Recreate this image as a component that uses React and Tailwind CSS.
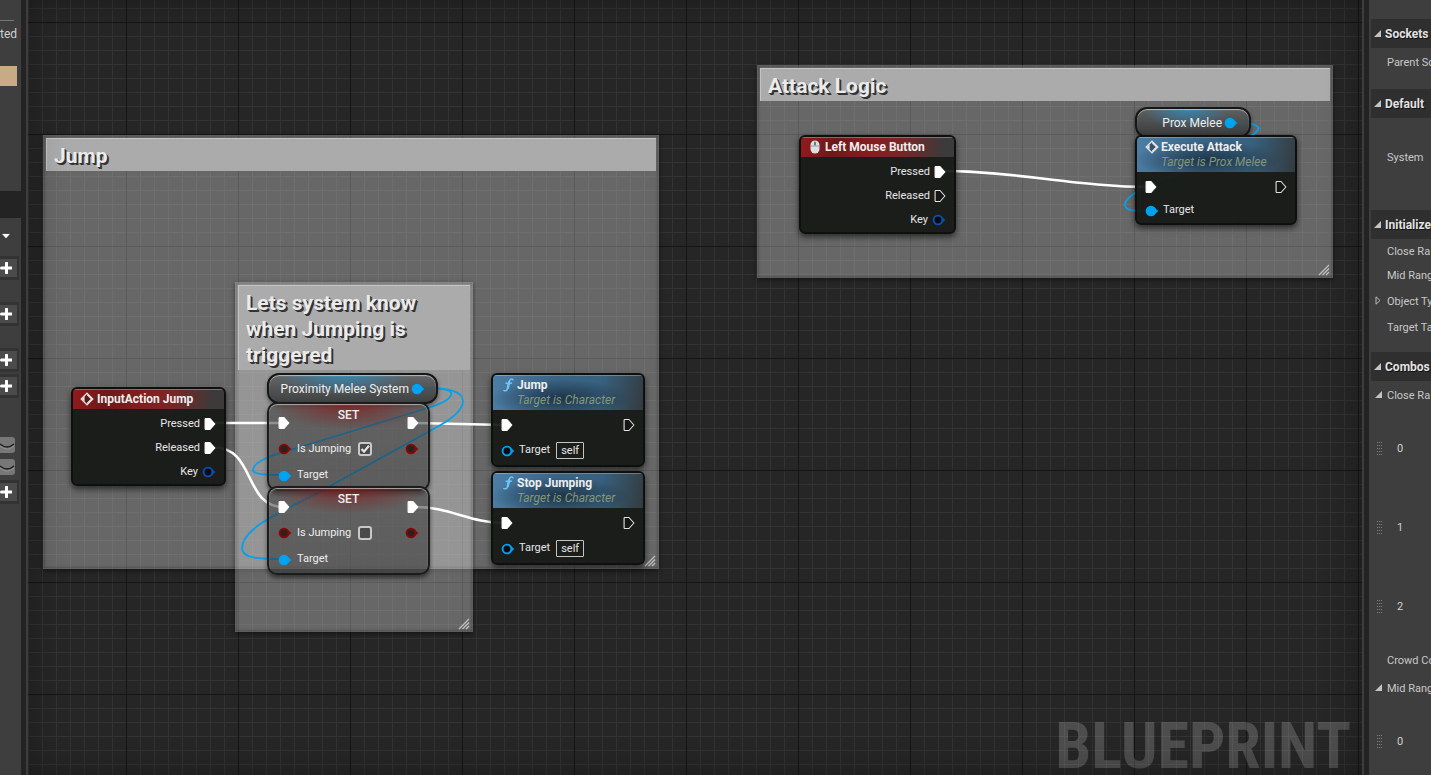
import { useState } from 'react';
import clsx from 'clsx';

const pinColors = { key: '#0b4fb3', object: '#00a2f2', bool: '#8c0606' };

function ExecPin({ connected }) {
  return (
    <svg width="12" height="14" viewBox="0 0 12 14" className="shrink-0">
      <path
        d="M1.9 1.5H6L10.9 7L6 12.5H1.9Q1.1 12.5 1.1 11.7V2.3Q1.1 1.5 1.9 1.5Z"
        fill={connected ? '#fff' : 'rgba(0,0,0,0.25)'}
        stroke={connected ? '#fff' : '#e4e4e4'}
        strokeWidth="1.1"
        strokeLinejoin="round"
      />
    </svg>
  );
}

function DataPin({ type, connected }) {
  const color = pinColors[type];
  return (
    <svg width="14" height="12" viewBox="0 0 14 12" className="shrink-0">
      <path d="M9.5 2.8L13.4 6L9.5 9.2Z" fill={color} />
      <circle cx="6" cy="6" r="4.4" fill={connected ? color : type === 'bool' ? '#2d2020' : '#080c10'} stroke={color} strokeWidth="1.9" />
    </svg>
  );
}

function EventIcon() {
  return (
    <svg width="14" height="14" viewBox="0 0 14 14" className="shrink-0">
      <path d="M7 1.2L12.8 7L7 12.8L1.2 7Z" fill="rgba(20,20,24,0.35)" stroke="#e6e2e2" strokeWidth="1.3" />
      <path d="M7.4 2.6L11.8 7L7.4 11.4" fill="none" stroke="#e6e2e2" strokeWidth="1.6" />
      <path d="M1.5 7L4.6 4.6V9.4Z" fill="#e6e2e2" />
    </svg>
  );
}

function MouseIcon() {
  return (
    <svg width="14" height="14" viewBox="0 0 14 14" className="shrink-0">
      <rect x="2.5" y="0.5" width="9" height="13" rx="4.5" fill="#dcdfe0" />
      <path d="M3 6H11M7 1V6" stroke="#8d9496" strokeWidth="0.9" />
      <rect x="6.2" y="2" width="1.6" height="3.2" rx="0.8" fill="#5c6265" />
    </svg>
  );
}

function FunctionIcon() {
  return (
    <svg width="14" height="14" viewBox="0 0 14 14" className="shrink-0">
      <path
        d="M12 1.8C10.6 0.5 8.8 1 8.3 3.4L6.7 10.2C6.3 12.4 4.8 13.4 2.8 12.5M5 5.2H10.4"
        fill="none"
        stroke="#6ec3f5"
        strokeWidth="1.5"
        strokeLinecap="round"
      />
      <path d="M8.4 3.4L6.6 10.6" stroke="#6ec3f5" strokeWidth="2.4" />
    </svg>
  );
}

function NodeFrame({ className, children }) {
  return (
    <article className={clsx('absolute overflow-hidden rounded-[6px] border-2 border-[#0e0f0f] bg-[#161816]/93 text-[11px] text-[#e6e6e6] shadow-[0_3px_6px_rgba(0,0,0,0.6)]', className)}>
      {children}
    </article>
  );
}

function EventNode({ className, icon, title, releasedConnected }) {
  return (
    <NodeFrame className={className}>
      <header className="flex h-5 items-center gap-[3px] border-t border-white/30 bg-[linear-gradient(100deg,#931a1c_0%,#6e1819_22%,#851d20_45%,#7a2527_65%,#3c3a3a_92%)] pb-[2px] pl-[7px] text-[12px] font-bold text-[#eee]">
        {icon}
        <h3>{title}</h3>
      </header>
      <div className="flex flex-col items-end pt-[3px] pr-2">
        <div className="flex h-6 items-center gap-1">
          Pressed
          <ExecPin connected />
        </div>
        <div className="flex h-6 items-center gap-1">
          Released
          <ExecPin connected={releasedConnected} />
        </div>
        <div className="flex h-6 items-center gap-1">
          Key
          <DataPin type="key" />
        </div>
      </div>
    </NodeFrame>
  );
}

function CallNode({ className, icon, title, subtitle, children }) {
  return (
    <NodeFrame className={className}>
      <header className="flex h-[35px] gap-[2px] border-t border-white/30 bg-[radial-gradient(ellipse_at_45%_65%,rgba(20,38,52,0.75),transparent_60%),linear-gradient(100deg,#4d7ea5_0%,#3a6485_40%,#38617f_70%,#333b40_100%)] pt-[2px] pl-2">
        {icon}
        <div>
          <h3 className="text-[12px] leading-[14px] font-bold text-[#eee]">{title}</h3>
          <p className="text-[12px] leading-4 text-[#84977a] italic">{subtitle}</p>
        </div>
      </header>
      <div className="flex h-[30px] items-center justify-between px-2">
        <ExecPin connected />
        <ExecPin />
      </div>
      {children}
    </NodeFrame>
  );
}

function FunctionNode({ className, title }) {
  return (
    <CallNode className={className} icon={<FunctionIcon />} title={title} subtitle="Target is Character">
      <div className="flex h-[25px] items-center gap-1 pb-1 pl-2">
        <DataPin type="object" />
        Target
        <span className="ml-[2px] rounded-[1px] border border-[#c4c4c4] px-1 leading-[15px]">self</span>
      </div>
    </CallNode>
  );
}

function GetterNode({ className, label }) {
  return (
    <article
      className={clsx(
        'absolute flex h-[31px] items-center justify-end gap-[2px] rounded-[12px] border-2 border-[#151616] pr-[11px] text-[12px] text-[#eee] shadow-[inset_0_1px_1px_rgba(255,255,255,0.55),0_2px_4px_rgba(0,0,0,0.45)]',
        'bg-[radial-gradient(ellipse_40%_75%_at_45%_0%,rgba(50,135,180,0.9),transparent),linear-gradient(#5c5e5fdd,#323536dd)]',
        className,
      )}
    >
      {label}
      <DataPin type="object" connected />
    </article>
  );
}

function SetNode({ className, id, checked: initial }) {
  const [checked, setChecked] = useState(initial);
  return (
    <article
      className={clsx(
        'absolute rounded-[10px] border-2 border-[#1b1c1c] px-[9px] pt-[5px] text-[11px] text-[#eee] shadow-[inset_0_1px_1px_rgba(255,255,255,0.55),0_3px_4px_rgba(0,0,0,0.5)]',
        'bg-[radial-gradient(ellipse_50%_26px_at_50%_0%,rgba(130,25,25,0.75),transparent),linear-gradient(#34343488,#2a2b2a88)]',
        className,
      )}
    >
      <header className="flex h-[27px] items-center justify-between">
        <ExecPin connected />
        <h3 className="self-start text-[12px] leading-3 font-medium">SET</h3>
        <ExecPin connected />
      </header>
      <div className="flex h-[26px] items-center justify-between">
        <div className="flex items-center gap-[5px]">
          <DataPin type="bool" />
          <label htmlFor={id}>Is Jumping</label>
          <span className="ml-[2px] grid size-[14px] place-items-center">
            <input
              id={id}
              type="checkbox"
              checked={checked}
              onChange={(event) => setChecked(event.target.checked)}
              className="col-start-1 row-start-1 size-[14px] appearance-none rounded-[3px] border-2 border-[#c9c9c9] bg-[#4a4a4a]"
            />
            {checked && (
              <svg width="12" height="12" viewBox="0 0 12 12" className="pointer-events-none col-start-1 row-start-1">
                <path d="M2.5 6L5 8.6L10 2.8" fill="none" stroke="#e4e4e4" strokeWidth="2.2" />
              </svg>
            )}
          </span>
        </div>
        <DataPin type="bool" />
      </div>
      <div className="flex h-[27px] items-center gap-[5px]">
        <DataPin type="object" connected />
        Target
      </div>
    </article>
  );
}

function CommentBox({ className, title }) {
  return (
    <section className={clsx('absolute border border-black/10 bg-white/30 p-[2px] shadow-[inset_0_0_3px_rgba(0,0,0,0.4),0_2px_5px_rgba(0,0,0,0.45)]', className)}>
      <h2 className="border-t border-l border-[#c4c4c4] bg-[#ababab] px-[7px] pt-1 pb-[2px] text-[21px] leading-[26px] font-bold text-[#ebebeb] [text-shadow:1px_1px_0_#333,2px_2px_0_#333]">
        {title}
      </h2>
      <svg width="12" height="12" viewBox="0 0 12 12" className="absolute right-[2px] bottom-[1px]">
        <path d="M1 11L11 1M4.5 11L11 4.5M8 11L11 8" stroke="#c2c2c2" strokeWidth="1.2" />
      </svg>
    </section>
  );
}

function Wires() {
  return (
    <svg className="pointer-events-none absolute inset-0 size-full" fill="none">
      <g transform="translate(-28 0)">
        <g stroke="#fff" strokeWidth="2.6">
          <path d="M214 423H284" />
          <path d="M214 447.500C256 447.500 243 507 284 507" />
          <path d="M416 423L505 425" />
          <path d="M416 507C450 507 470 523 505 523" />
          <path d="M944 171C1015 171 1078 187 1150 187" />
        </g>
        <g stroke="#06a0ec" strokeWidth="1.8">
          <path d="M420 388.500C442 388 453 389 451 395C449 401 438 405 426 408.500L297 448C280 453 253 460 253 470C253 475 268 475 281 475" />
          <path d="M420 388.500C450 387 463 392 463 401C463 411 450 420 437 427L312 496C285 510 242 528 242 548C242 559 262 559 281 559" />
          <path d="M1234 123C1252 122 1261 126 1258 130C1254 137 1235 142 1222 149L1180 172C1150 186 1125 194 1125 205C1125 211 1136 211 1148 211" />
        </g>
      </g>
    </svg>
  );
}

function Graph() {
  return (
    <main className="relative min-w-0 flex-1 overflow-hidden bg-[#262626]">
      <div className="absolute inset-0 bg-[linear-gradient(90deg,#151515_1px,transparent_1px),linear-gradient(#151515_1px,transparent_1px),linear-gradient(90deg,#323232_1px,transparent_1px),linear-gradient(#323232_1px,transparent_1px)] bg-[size:112px_112px,112px_112px,14px_14px,14px_14px] bg-[position:98px_22px,98px_22px,0px_8px,0px_8px]" />
      <p className="absolute right-[11px] bottom-0 font-['Roboto_Condensed','Liberation_Sans_Narrow',Roboto,sans-serif] text-[64px] leading-14 font-bold text-white/18">
        BLUEPRINT
      </p>

      <CommentBox className="top-[135px] left-[15px] h-[434px] w-[616px]" title="Jump" />
      <CommentBox className="top-[282px] left-[207px] h-[350px] w-[238px]" title="Lets system know when Jumping is triggered" />
      <CommentBox className="top-[65px] left-[729px] h-[213px] w-[576px]" title="Attack Logic" />

      <Wires />

      <EventNode className="top-[387px] left-[43px] w-[155px]" icon={<EventIcon />} title="InputAction Jump" releasedConnected />
      <GetterNode className="top-[373px] left-[239px] w-[171px]" label="Proximity Melee System" />
      <SetNode className="top-[402px] left-[239px] w-[163px]" id="is-jumping-pressed" checked />
      <SetNode className="top-[486px] left-[239px] w-[163px]" id="is-jumping-released" checked={false} />
      <FunctionNode className="top-[373px] left-[463px] w-[154px]" title="Jump" />
      <FunctionNode className="top-[471px] left-[463px] w-[154px]" title="Stop Jumping" />

      <EventNode className="top-[135px] left-[771px] w-[157px]" icon={<MouseIcon />} title="Left Mouse Button" />
      <GetterNode className="top-[107px] left-[1107px] w-[116px]" label="Prox Melee" />
      <CallNode className="top-[135px] left-[1107px] w-[162px]" icon={<EventIcon />} title="Execute Attack" subtitle="Target is Prox Melee">
        <div className="flex h-[21px] items-center gap-1 pb-1 pl-2">
          <DataPin type="object" connected />
          Target
        </div>
      </CallNode>

      <div className="pointer-events-none absolute inset-0 shadow-[inset_0_0_36px_rgba(0,0,0,0.3)]" />
    </main>
  );
}

function AddButton({ className }) {
  return (
    <button type="button" aria-label="Add element" className={clsx('flex h-6 w-[19px] items-center border-y-[3px] border-r-2 border-[#333] bg-[#4b4b4b]', className)}>
      <svg width="12" height="12" viewBox="0 0 12 12">
        <path d="M6.500 1V11M1.500 6H11.500" stroke="#fff" strokeWidth="3" strokeLinecap="round" />
      </svg>
    </button>
  );
}

function CurveButton({ className }) {
  return (
    <button type="button" aria-label="Browse" className={clsx('flex h-4 w-[15px] items-center rounded-r-[3px] bg-[#777]', className)}>
      <svg width="15" height="16" viewBox="0 0 15 16">
        <path d="M0 7Q7 13 14 7" fill="none" stroke="#1c1c1c" strokeWidth="1.3" />
        <path d="M0 9Q7 15 14 9" fill="none" stroke="#999" strokeWidth="0.8" />
      </svg>
    </button>
  );
}

function LeftPanel() {
  return (
    <aside className="w-7 shrink-0 border-r-2 border-[#3d3d3d] bg-[#232323] pr-[5px]">
      <div className="h-[191px] bg-[#3e3e3e] pt-5">
        <hr className="w-[14px] border-[#777]" />
        <p className="mt-[5px] text-[12px] leading-4 text-[#d0d0d0]">ted</p>
        <div className="mt-6 h-5 w-[17px] bg-[#c8ab86]" />
      </div>
      <div className="mt-[27px] h-full bg-[#3e3e3e] pt-[14px]">
        <button type="button" aria-label="Options" className="flex h-2 w-3 items-center">
          <svg width="12" height="8" viewBox="0 0 12 8">
            <path d="M1.200 1.500H10.800L6 6.800Z" fill="#fff" stroke="#111" strokeWidth="0.6" />
          </svg>
        </button>
        <AddButton className="mt-4" />
        <AddButton className="mt-[22px]" />
        <AddButton className="mt-[22px]" />
        <AddButton className="mt-[2px]" />
        <CurveButton className="mt-[39px]" />
        <CurveButton className="mt-[6px]" />
        <AddButton className="mt-[5px]" />
      </div>
    </aside>
  );
}

function SectionHeader({ className, title }) {
  return (
    <button type="button" className={clsx('ml-[2px] flex h-[29px] w-full items-center gap-1 bg-[#2f2f2f] pl-[3px] text-[12px] font-bold whitespace-nowrap text-[#e2e2e2] [text-shadow:1px_1px_0_#111]', className)}>
      <svg width="7" height="7" viewBox="0 0 7 7" className="shrink-0">
        <path d="M7 0V7H0Z" fill="#c4c4c4" />
      </svg>
      {title}
    </button>
  );
}

function PropertyRow({ className, label, arrow }) {
  return (
    <div className={clsx('flex items-center pt-[2px] pl-1 text-[11px] whitespace-nowrap text-[#c8c8c8]', className)}>
      <span className="flex w-[14px] shrink-0 items-center pb-[3px] pl-[1px]">
        {arrow === 'open' && (
          <svg width="8" height="7" viewBox="0 0 8 7">
            <path d="M8 0V7H1Z" fill="#c4c4c4" />
          </svg>
        )}
        {arrow === 'closed' && (
          <svg width="8" height="9" viewBox="0 0 8 9">
            <path d="M2 0.800L6 4.500L2 8.200Z" fill="none" stroke="#b8b8b8" />
          </svg>
        )}
      </span>
      {label}
    </div>
  );
}

function ArrayRow({ index }) {
  return (
    <div className="flex h-[79px] items-center gap-[15px] pt-px pl-[7px] text-[11px] text-[#d0d0d0]">
      <svg width="6" height="14" viewBox="0 0 6 14" className="shrink-0">
        <path d="M1.500 0V14M3.500 0V14M5.500 0V14" stroke="#808080" strokeWidth="1" strokeDasharray="1 2" />
      </svg>
      {index}
    </div>
  );
}

function DetailsPanel() {
  return (
    <aside className="w-[69px] shrink-0 overflow-hidden border-l-2 border-[#3d3d3d] bg-[#232323] pl-[5px]">
      <div className="min-h-full overflow-hidden bg-[#3e3e3e] pt-[19px]">
        <SectionHeader title="Sockets" />
        <PropertyRow className="h-7" label="Parent So" />
        <SectionHeader className="mt-[13px]" title="Default" />
        <PropertyRow className="h-[78px]" label="System" />
        <SectionHeader className="mt-[14px]" title="Initialize" />
        <PropertyRow className="h-6" label="Close Ra" />
        <PropertyRow className="h-6" label="Mid Rang" />
        <PropertyRow className="h-7" label="Object Ty" arrow="closed" />
        <PropertyRow className="h-6" label="Target Ta" />
        <SectionHeader className="mt-[13px]" title="Combos" />
        <PropertyRow className="h-7" label="Close Ra" arrow="open" />
        {[0, 1, 2].map((index) => (
          <ArrayRow key={index} index={index} />
        ))}
        <PropertyRow className="h-7" label="Crowd Co" />
        <PropertyRow className="h-7" label="Mid Rang" arrow="open" />
        <ArrayRow index={0} />
      </div>
    </aside>
  );
}

export default function App() {
  return (
    <div className="flex h-screen overflow-hidden bg-[#232323] font-[Roboto,sans-serif]">
      <LeftPanel />
      <Graph />
      <DetailsPanel />
    </div>
  );
}
